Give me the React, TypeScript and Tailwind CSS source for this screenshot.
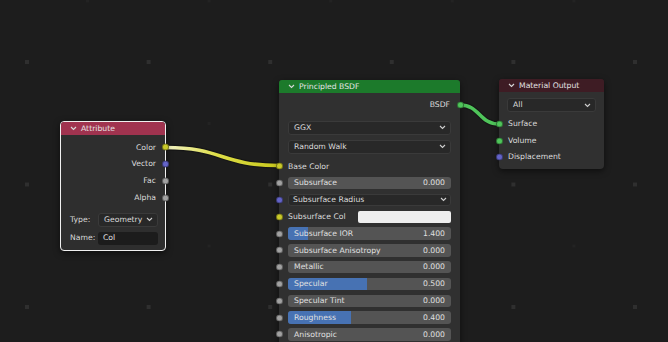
import React from "react";

const GRAY = "#a1a1a1";
const YELLOW = "#c9c92a";
const PURPLE = "#6363c7";
const GREEN = "#4fc45a";

function Chevron({ className = "" }: { className?: string }) {
  return (
    <svg width="7" height="5" viewBox="0 0 7 5" className={className}>
      <path d="M1 1 L3.5 3.5 L6 1" fill="none" stroke="currentColor" strokeWidth="1.1" />
    </svg>
  );
}

function Socket({ color, side }: { color: string; side: "left" | "right" }) {
  return (
    <span
      className={`absolute top-1/2 z-10 h-[7px] w-[7px] -translate-y-1/2 rounded-full border border-black/40 ${
        side === "left" ? "left-[-3.5px]" : "right-[-3.5px]"
      }`}
      style={{ background: color }}
    />
  );
}

function Header({ title, bg }: { title: string; bg: string }) {
  return (
    <div
      className="flex h-[13px] items-center gap-[4px] rounded-t-[3px] pl-[9px] text-[#e4e4e4]"
      style={{ background: bg }}
    >
      <Chevron className="text-[#d8d8d8]" />
      <span>{title}</span>
    </div>
  );
}

function Dropdown({ label, className = "" }: { label: string; className?: string }) {
  return (
    <div
      className={`flex h-[14px] items-center justify-between rounded-[3px] border border-[#3a3a3a] bg-[#282828] pl-[5px] pr-[4px] text-[#dcdcdc] ${className}`}
    >
      <span>{label}</span>
      <Chevron className="text-[#cfcfcf]" />
    </div>
  );
}

function Slider({ label, value, fill }: { label: string; value: string; fill: number }) {
  return (
    <div className="relative flex h-[12.5px] items-center justify-between overflow-hidden rounded-[3px] bg-[#545454] px-[6px] text-[#e0e0e0]">
      {fill > 0 && (
        <div className="absolute inset-y-0 left-0 bg-[#4772b3]" style={{ width: `${fill * 100}%` }} />
      )}
      <span className="relative">{label}</span>
      <span className="relative">{value}</span>
    </div>
  );
}

function InRow({ color, children }: { color: string; children: React.ReactNode }) {
  return (
    <div className="relative flex h-[16.8px] items-center px-[9px]">
      <Socket color={color} side="left" />
      <div className="flex-1">{children}</div>
    </div>
  );
}

function OutRow({ label, color }: { label: string; color: string }) {
  return (
    <div className="relative flex h-[16.8px] items-center justify-end pr-[9px] text-[#dcdcdc]">
      <span>{label}</span>
      <Socket color={color} side="right" />
    </div>
  );
}

const links = (
  <svg className="absolute inset-0" width="668" height="342">
    <defs>
      <linearGradient id="yl" gradientUnits="userSpaceOnUse" x1="167" y1="0" x2="277" y2="0">
        <stop offset="0" stopColor="#f2f2c4" />
        <stop offset="0.45" stopColor="#dede48" />
        <stop offset="1" stopColor="#c8c81e" />
      </linearGradient>
    </defs>
    {[0, 1, 2, 3, 4, 5, 6].map((i) =>
      [0, 1, 2, 3].map((j) => (
        <rect key={`M${i}-${j}`} x={25 + i * 121.6} y={60 + j * 122.5} width="4" height="4" fill="#2f2f2f" />
      ))
    )}
    {[-1, 0, 1, 2, 3, 4, 5].map((i) =>
      [-1, 0, 1, 2].map((j) => (
        <rect key={`m${i}-${j}`} x={86 + i * 121.6} y={122 + j * 122.5} width="3" height="3" fill="#232323" />
      ))
    )}
    <path d="M166 147.5 C 222 147.5 222 165.5 278 165.5" fill="none" stroke="#121212" strokeWidth="6" strokeOpacity="0.7" />
    <path d="M166 147.5 C 222 147.5 222 165.5 278 165.5" fill="none" stroke="url(#yl)" strokeWidth="3.6" />
    <path d="M460 105 C 480 105 479 124 499 124" fill="none" stroke="#121212" strokeWidth="6" strokeOpacity="0.7" />
    <path d="M460 105 C 480 105 479 124 499 124" fill="none" stroke={GREEN} strokeWidth="3.6" />
  </svg>
);

const sliders: { label: string; value: string; color: string; fill: number; kind?: string }[] = [
  { label: "Subsurface", value: "0.000", color: GRAY, fill: 0 },
  { label: "Subsurface Radius", value: "", color: PURPLE, fill: 0, kind: "drop" },
  { label: "Subsurface Col", value: "", color: YELLOW, fill: 0, kind: "color" },
  { label: "Subsurface IOR", value: "1.400", color: GRAY, fill: 0.125 },
  { label: "Subsurface Anisotropy", value: "0.000", color: GRAY, fill: 0 },
  { label: "Metallic", value: "0.000", color: GRAY, fill: 0 },
  { label: "Specular", value: "0.500", color: GRAY, fill: 0.485 },
  { label: "Specular Tint", value: "0.000", color: GRAY, fill: 0 },
  { label: "Roughness", value: "0.400", color: GRAY, fill: 0.385 },
  { label: "Anisotropic", value: "0.000", color: GRAY, fill: 0 },
];

export default function App() {
  return (
    <div className="relative h-[342px] w-[668px] overflow-hidden bg-[#1d1d1d] font-['DejaVu_Sans',sans-serif] text-[7.7px] leading-none">
      {links}

      {/* Attribute */}
      <div className="absolute left-[60px] top-[121px] w-[106px] rounded-[4px] border border-[#f0f0f0] bg-[#2e2e2e] pb-[5px] shadow-[0_2px_6px_rgba(0,0,0,0.55)]">
        <Header title="Attribute" bg="#a0334f" />
        <div className="pt-[4px]">
          <OutRow label="Color" color={YELLOW} />
          <OutRow label="Vector" color={PURPLE} />
          <OutRow label="Fac" color={GRAY} />
          <OutRow label="Alpha" color={GRAY} />
        </div>
        <div className="mt-[6.5px] flex items-center pl-[9px] pr-[7px] text-[#d8d8d8]">
          <span className="w-[28px]">Type:</span>
          <Dropdown label="Geometry" className="flex-1" />
        </div>
        <div className="mt-[5px] flex items-center pl-[9px] pr-[7px] text-[#d8d8d8]">
          <span className="w-[28px]">Name:</span>
          <div className="flex h-[13px] flex-1 items-center rounded-[3px] bg-[#1c1c1c] pl-[5px] text-[#e0e0e0]">Col</div>
        </div>
      </div>

      {/* Principled BSDF */}
      <div className="absolute left-[279px] top-[80px] w-[181px] rounded-[4px] bg-[#303030] pb-[10px] shadow-[0_2px_6px_rgba(0,0,0,0.55)]">
        <Header title="Principled BSDF" bg="#1c7a2b" />
        <div className="pt-[3.5px]">
          <div className="relative flex h-[17px] items-center justify-end pr-[10px] text-[#dcdcdc]">
            <span>BSDF</span>
            <Socket color={GREEN} side="right" />
          </div>
        </div>
        <div className="px-[9px]">
          <Dropdown label="GGX" className="mt-[7px]" />
          <Dropdown label="Random Walk" className="mt-[5px]" />
        </div>
        <div className="mt-[4.5px]">
          <InRow color={YELLOW}>
            <span className="text-[#dcdcdc]">Base Color</span>
          </InRow>
          {sliders.map((s) => (
            <InRow key={s.label} color={s.color}>
              {s.kind === "drop" ? (
                <div className="flex h-[12.5px] items-center justify-between rounded-[3px] border border-[#3a3a3a] bg-[#282828] pl-[4px] pr-[3px] text-[#dcdcdc]">
                  <span>{s.label}</span>
                  <Chevron className="text-[#cfcfcf]" />
                </div>
              ) : s.kind === "color" ? (
                <div className="flex items-center text-[#dcdcdc]">
                  <span className="w-[70px]">{s.label}</span>
                  <div className="h-[12.5px] flex-1 rounded-[2px] bg-[#eeeeee]" />
                </div>
              ) : (
                <Slider label={s.label} value={s.value} fill={s.fill} />
              )}
            </InRow>
          ))}
        </div>
      </div>

      {/* Material Output */}
      <div className="absolute left-[499px] top-[79px] w-[105px] rounded-[4px] bg-[#303030] pb-[3px] shadow-[0_2px_6px_rgba(0,0,0,0.55)]">
        <Header title="Material Output" bg="#3e1c24" />
        <div className="px-[8px]">
          <Dropdown label="All" className="mt-[6px]" />
        </div>
        <div className="mt-[4px] text-[#dcdcdc]">
          {[
            ["Surface", GREEN],
            ["Volume", GREEN],
            ["Displacement", PURPLE],
          ].map(([label, color]) => (
            <div key={label} className="relative flex h-[16.5px] items-center pl-[9px]">
              <Socket color={color} side="left" />
              <span>{label}</span>
            </div>
          ))}
        </div>
      </div>
    </div>
  );
}
